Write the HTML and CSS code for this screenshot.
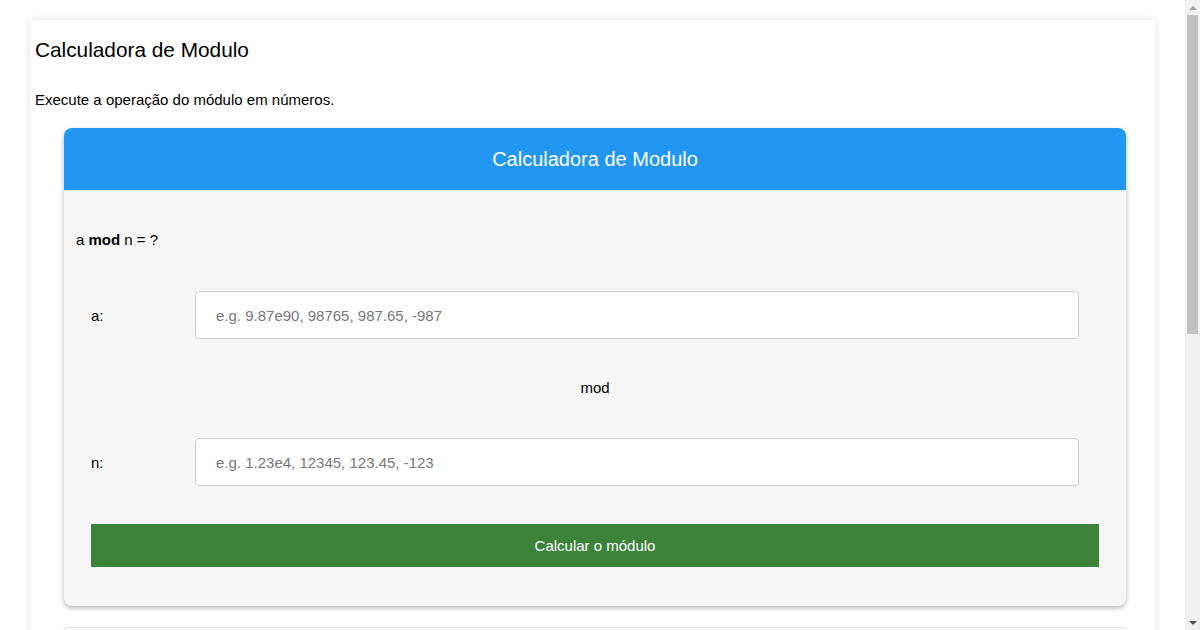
FILE: index.html
```html
<!DOCTYPE html>
<html lang="pt">
<head>
<meta charset="UTF-8">
<meta name="viewport" content="width=device-width, initial-scale=1.0">
<title>Calculadora de Modulo</title>
<link rel="stylesheet" href="styles.css">
</head>
<body>

<div class="page">
  <h1 class="page-title">Calculadora de Modulo</h1>
  <p class="intro">Execute a operação do módulo em números.</p>

  <div class="calc-card">
    <div class="calc-header">Calculadora de Modulo</div>
    <div class="calc-body">
      <p class="formula">a <b>mod</b> n = ?</p>
      <div class="calc-form">
        <div class="field-row">
          <label class="field-label" for="num-a">a:</label>
          <input class="field-input" id="num-a" type="text" placeholder="e.g. 9.87e90, 98765, 987.65, -987">
        </div>
        <div class="op-row">mod</div>
        <div class="field-row">
          <label class="field-label" for="num-n">n:</label>
          <input class="field-input" id="num-n" type="text" placeholder="e.g. 1.23e4, 12345, 123.45, -123">
        </div>
        <button class="calc-button" type="button">Calcular o módulo</button>
      </div>
    </div>
  </div>

  <div class="result-card"></div>
</div>

<!-- barra de rolagem da janela -->
<div class="scrollbar">
  <div class="scroll-btn"><span class="arrow-up"></span></div>
  <div class="scroll-track"><div class="scroll-thumb"></div></div>
  <div class="scroll-btn"><span class="arrow-down"></span></div>
</div>

</body>
</html>
```

FILE: styles.css
```css
body {
  margin: 0;
  padding: 0;
  background-color: #fff;
  font-family: "Liberation Sans", Arial, sans-serif;
  font-size: 15px;
  color: #000;
}

.page {
  margin: 20px 45px 40px 30px;
  padding: 18px 0 20px 5px;
  background-color: #fff;
  box-shadow: 0 0 8px rgba(0, 0, 0, 0.12);
}

.page-title {
  margin: 0;
  font-size: 20.8px;
  font-weight: normal;
  line-height: 24px;
}

.intro {
  margin: 29px 0 20px 0;
  line-height: 17px;
}

.calc-card {
  width: 1062px;
  margin: 0 auto;
  background-color: #f6f6f6;
  border-radius: 8px;
  box-shadow: 0 2px 5px rgba(0, 0, 0, 0.3);
  overflow: hidden;
}

.calc-header {
  height: 62px;
  line-height: 62px;
  text-align: center;
  background-color: #2196f3;
  color: #fff;
  font-size: 20px;
}

.calc-body {
  padding: 41px 12px 39px 12px;
}

.formula {
  margin: 0 0 43px 0;
  line-height: 17px;
}

.calc-form {
  padding: 0 15px;
}

.field-row {
  display: flex;
  align-items: center;
  padding-right: 20px;
}

.field-label {
  width: 104px;
  flex-shrink: 0;
}

.field-input {
  flex: 1;
  height: 48px;
  box-sizing: border-box;
  padding: 0 20px;
  border: 1px solid #ccc;
  border-radius: 4px;
  background-color: #fff;
  font-family: "Liberation Sans", Arial, sans-serif;
  font-size: 15px;
  color: #000;
}

.field-input::placeholder {
  color: #777;
}

.op-row {
  padding: 40px 0 42px 0;
  line-height: 17px;
  text-align: center;
}

.calc-button {
  display: block;
  width: 100%;
  height: 43px;
  margin-top: 38px;
  border: none;
  background-color: #3b833a;
  color: #fff;
  font-family: "Liberation Sans", Arial, sans-serif;
  font-size: 15px;
  cursor: pointer;
}

.result-card {
  width: 1062px;
  height: 500px;
  margin: 21px auto 0 auto;
  border: 1px solid #ddd;
  border-radius: 4px;
  background-color: #fff;
}

.scrollbar {
  position: fixed;
  top: 0;
  right: 0;
  width: 15px;
  height: 100vh;
  display: flex;
  flex-direction: column;
  background-color: #f1f1f1;
}

.scroll-btn {
  height: 15px;
  display: flex;
  align-items: center;
  justify-content: center;
  flex-shrink: 0;
}

.arrow-up {
  width: 0;
  height: 0;
  border-left: 4px solid transparent;
  border-right: 4px solid transparent;
  border-bottom: 4px solid #a3a3a3;
}

.arrow-down {
  width: 0;
  height: 0;
  border-left: 4px solid transparent;
  border-right: 4px solid transparent;
  border-top: 4px solid #505050;
}

.scroll-track {
  flex: 1;
  padding: 0 2px;
}

.scroll-thumb {
  height: 319px;
  background-color: #c1c1c1;
}
```
